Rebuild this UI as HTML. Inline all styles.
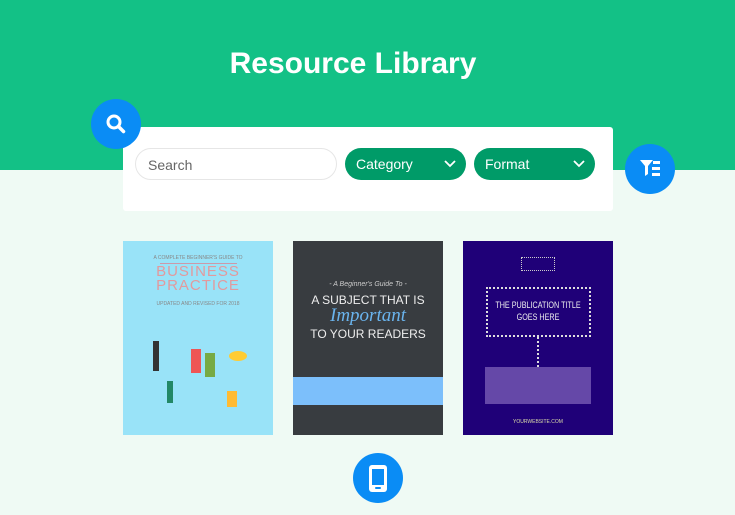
<!DOCTYPE html>
<html><head><meta charset="utf-8"><style>
*{margin:0;padding:0;box-sizing:border-box}
body{width:735px;height:515px;background:#effaf4;font-family:"Liberation Sans",sans-serif;position:relative;overflow:hidden}
.hdr{position:absolute;left:0;top:0;width:735px;height:170px;background:#13c186}
h1{position:absolute;left:0;width:706px;top:47px;text-align:center;color:#fff;font-size:30px;font-weight:bold}
.card{position:absolute;left:123px;top:127px;width:490px;height:84px;background:#fff;border-radius:3px}
.search{position:absolute;left:135px;top:148px;width:202px;height:32px;border:1px solid #e6e6e6;border-radius:16px;font-size:14px;color:#666;padding:8px 12px}
.sel{position:absolute;top:148px;width:121px;height:32px;border-radius:16px;background:#009b68;color:#fff;font-size:14px;padding:8px 11px}
.sel svg{position:absolute;right:10px;top:12px}
.circ{position:absolute;width:50px;height:50px;border-radius:50%;background:#0a8cf5}
.circ svg{position:absolute;left:0;top:0}
.cov{position:absolute;top:241px;width:150px;height:194px;overflow:hidden}
</style></head><body>
<div class="hdr"></div>
<h1>Resource Library</h1>
<div class="card"></div>
<div class="search">Search</div>
<div class="sel" style="left:345px">Category<svg width="12" height="8"><path d="M1 1l5 5 5-5" stroke="#fff" stroke-width="1.8" fill="none"/></svg></div>
<div class="sel" style="left:474px">Format<svg width="12" height="8"><path d="M1 1l5 5 5-5" stroke="#fff" stroke-width="1.8" fill="none"/></svg></div>
<div class="circ" style="left:91px;top:99px"><svg width="50" height="50"><circle cx="23" cy="23" r="6" stroke="#fff" stroke-width="3" fill="none"/><path d="M27.5 27.5l5 5" stroke="#fff" stroke-width="3.5" stroke-linecap="round"/></svg></div>
<div class="circ" style="left:625px;top:144px"><svg width="50" height="50"><path d="M15 16h13l-5 6v8l-3 2v-10z" fill="#fff"/><rect x="28" y="17" width="7" height="3" fill="#fff"/><rect x="27" y="23" width="8" height="3" fill="#fff"/><rect x="27" y="29" width="8" height="3" fill="#fff"/></svg></div>
<div class="circ" style="left:353px;top:453px"><svg width="50" height="50"><rect x="16" y="12" width="18" height="27" rx="3" fill="#fff"/><rect x="19" y="16" width="12" height="16" fill="#0a8cf5"/><rect x="22" y="34" width="6" height="2" rx="1" fill="#0a8cf5"/></svg></div>

<div class="cov" style="left:123px;background:#99e3f8">
<div style="position:absolute;top:14px;width:100%;text-align:center;font-size:5px;color:#888">A COMPLETE BEGINNER'S GUIDE TO</div>
<div style="position:absolute;left:37px;top:22px;width:77px;border-top:1px solid #c9a;"></div>
<div style="position:absolute;top:24px;width:100%;text-align:center;font-size:15px;line-height:14px;color:#e29a9e;letter-spacing:1px">BUSINESS<br>PRACTICE</div>
<div style="position:absolute;top:60px;width:100%;text-align:center;font-size:5px;color:#888">UPDATED AND REVISED FOR 2018</div>
<div style="position:absolute;left:30px;top:100px;width:6px;height:30px;background:#333"></div>
<div style="position:absolute;left:68px;top:108px;width:10px;height:24px;background:#e55"></div>
<div style="position:absolute;left:82px;top:112px;width:10px;height:24px;background:#7a4"></div>
<div style="position:absolute;left:106px;top:110px;width:18px;height:10px;background:#fc3;border-radius:50%"></div>
<div style="position:absolute;left:104px;top:150px;width:10px;height:16px;background:#fb3"></div>
<div style="position:absolute;left:44px;top:140px;width:6px;height:22px;background:#286"></div>
</div>
<div class="cov" style="left:293px;background:#383c40">
<div style="position:absolute;top:40px;width:100%;text-align:center;font-size:7px;color:#ccc;font-style:italic">- A Beginner's Guide To -</div>
<div style="position:absolute;top:52px;width:100%;text-align:center;font-size:12px;color:#eee">A SUBJECT THAT IS</div>
<div style="position:absolute;top:64px;width:100%;text-align:center;font-size:19px;color:#6ab4ee;font-style:italic;font-family:'Liberation Serif',serif">Important</div>
<div style="position:absolute;top:86px;width:100%;text-align:center;font-size:12px;color:#eee">TO YOUR READERS</div>
<div style="position:absolute;top:136px;width:100%;height:28px;background:#7cbffb"></div>
</div>
<div class="cov" style="left:463px;background:#1f0078">
<div style="position:absolute;left:58px;top:16px;width:34px;height:14px;border:1px dotted #ccc"></div>
<div style="position:absolute;left:23px;top:46px;width:105px;height:50px;border:2px dotted #ddd"></div>
<div style="position:absolute;top:58px;width:100%;text-align:center;font-size:9px;line-height:12px;color:#eee;transform:scaleX(0.8)">THE PUBLICATION TITLE<br>GOES HERE</div>
<div style="position:absolute;left:74px;top:96px;height:30px;border-left:2px dotted #ddd"></div>
<div style="position:absolute;left:22px;top:126px;width:106px;height:37px;background:#6548a8"></div>
<div style="position:absolute;top:178px;width:100%;text-align:center;font-size:5px;color:#dda">YOURWEBSITE.COM</div>
</div>
</body></html>
